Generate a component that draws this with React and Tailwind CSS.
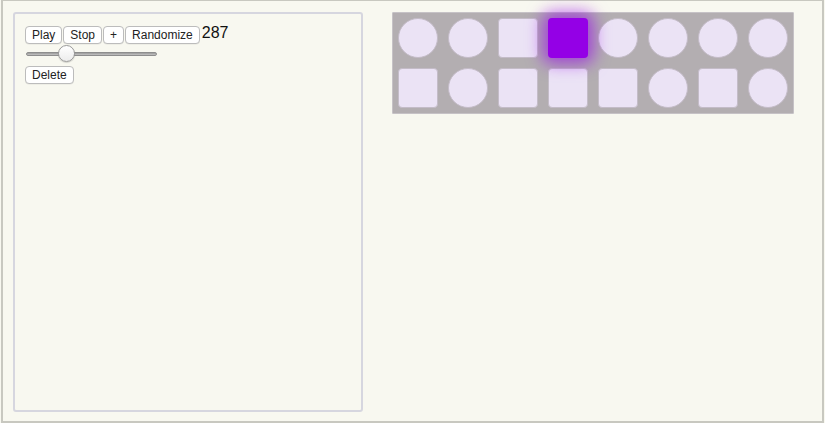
import React from "react";

const row1 = ["c", "c", "s", "a", "c", "c", "c", "c"];
const row2 = ["s", "c", "s", "s", "s", "c", "s", "c"];

function Cell({ t }) {
  if (t === "a") {
    return (
      <div className="m-[5px] w-10 h-10 rounded-[4px] bg-[#9400e6] shadow-[0_0_16px_6px_rgba(150,0,235,0.6)] relative z-10" />
    );
  }
  return (
    <div
      className={
        "m-[5px] w-10 h-10 bg-[#ebe3f5] border border-[#c4bcc8] " +
        (t === "c" ? "rounded-full" : "rounded-[4px]")
      }
    />
  );
}

function Btn({ children }) {
  return (
    <button className="h-[18px] px-[6px] bg-white border border-[#bcbcbc] rounded-[4px] text-[12px] leading-[16px] text-[#222] shadow-[0_0.5px_0.5px_rgba(0,0,0,0.08)]">
      {children}
    </button>
  );
}

export default function App() {
  return (
    <div
      className="w-[825px] h-[423px] bg-[#f8f8f0] pl-px"
      style={{ fontFamily: '"Liberation Sans", Arial, sans-serif' }}
    >
      <div className="w-[823px] h-[423px] border-l-2 border-r-2 border-t border-b-2 border-[#c8c8c0] pl-[10px] pt-[11px] flex items-start gap-[29px]">
        <div className="w-[350px] h-[400px] border-2 border-[#d6d6df] rounded-[3px] pl-[10px] pt-[12px] flex flex-col">
          <div className="flex items-center gap-px h-[18px]">
            <Btn>Play</Btn>
            <Btn>Stop</Btn>
            <Btn>+</Btn>
            <Btn>Randomize</Btn>
            <span className="text-[16px] leading-[18px] text-[#111] ml-px -mt-[4px]">287</span>
          </div>
          <div className="relative w-[131px] h-[19px] mt-0 ml-px flex items-center">
            <div className="w-full h-[4px] rounded-full bg-gradient-to-b from-[#9a9a9a] to-[#c4c4c4] border border-[#8e8e8e]" />
            <div className="absolute left-[32px] top-[1px] w-[17px] h-[17px] rounded-full bg-gradient-to-b from-white to-[#ececec] border border-[#9a9a9a] shadow-[0_1px_1px_rgba(0,0,0,0.15)]" />
          </div>
          <div className="flex mt-[3px]">
            <Btn>Delete</Btn>
          </div>
        </div>
        <div className="grid grid-cols-8 border border-[#c6c2c6] bg-[#b3aeb1] rounded-[1px]">
          {row1.map((t, i) => (
            <Cell key={"a" + i} t={t} />
          ))}
          {row2.map((t, i) => (
            <Cell key={"b" + i} t={t} />
          ))}
        </div>
      </div>
    </div>
  );
}
